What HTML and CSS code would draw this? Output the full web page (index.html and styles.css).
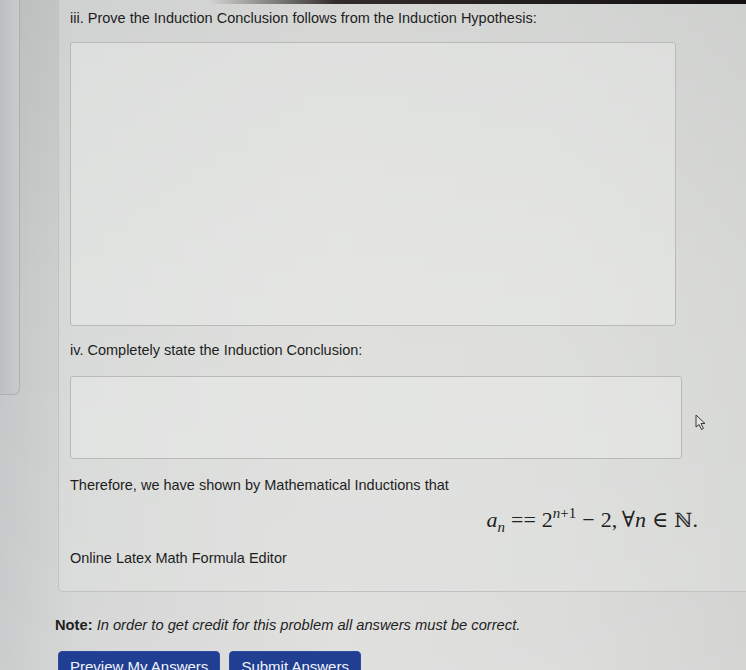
FILE: index.html
```html
<!DOCTYPE html>
<html>
<head>
<meta charset="utf-8">
<link rel="stylesheet" href="styles.css">
</head>
<body>
<div class="bezel"></div>
<div class="page">
  <div class="sidebar"></div>
  <div class="main">
    <div class="well">
      <p class="label">iii. Prove the Induction Conclusion follows from the Induction Hypothesis:</p>
      <div class="box box-large"></div>
      <p class="label label-iv">iv. Completely state the Induction Conclusion:</p>
      <div class="box box-small"></div>
      <p class="label label-therefore">Therefore, we have shown by Mathematical Inductions that</p>
      <div class="formula"><span class="math"><i>a</i><sub><i>n</i></sub><span class="op">==</span>2<sup><i>n</i>+1</sup><span class="op">−</span>2,&thinsp;∀<i>n</i><span class="op">∈</span><span class="bb">ℕ</span>.</span></div>
      <p class="label label-editor">Online Latex Math Formula Editor</p>
    </div>
    <p class="note"><b>Note:</b> <i>In order to get credit for this problem all answers must be correct.</i></p>
    <div class="buttons">
      <button class="btn">Preview My Answers</button>
      <button class="btn">Submit Answers</button>
    </div>
  </div>
</div>
<svg class="pointer" width="12" height="17" viewBox="0 0 12 17"><path d="M1 1 L1 13 L4 10.5 L6.5 15.5 L8.5 14.5 L6 9.5 L10 9.5 Z" fill="#e4e4e2" stroke="#3a3a3a" stroke-width="1" stroke-linejoin="round"/></svg>
</body>
</html>
```
FILE: styles.css
```css
html, body {
  margin: 0;
  padding: 0;
}
body {
  width: 746px;
  height: 670px;
  overflow: hidden;
  position: relative;
  font-family: "Liberation Sans", Arial, sans-serif;
  color: #1e1e1e;
  background:
    linear-gradient(180deg, rgba(160,162,162,0.25) 0%, rgba(255,255,255,0) 45%, rgba(255,255,255,0.12) 100%),
    linear-gradient(90deg, #c3c5c6 0%, #d1d3d2 10%, #dcdcda 45%, #d8d9d7 75%, #cfd0ce 100%);
}
.bezel {
  position: absolute;
  top: 0;
  left: 0;
  width: 746px;
  height: 4px;
  background: linear-gradient(90deg, rgba(20,15,15,0) 28%, rgba(20,15,15,0.85) 45%, #140f10 100%);
}
.page {
  display: flex;
  align-items: flex-start;
}
.sidebar {
  width: 19px;
  height: 394px;
  flex: none;
  background: linear-gradient(90deg, #bcc0c1, #c8cbcb);
  border-right: 1px solid #aeb1b1;
  border-bottom: 1px solid #aeb1b1;
  border-radius: 0 0 7px 0;
}
.main {
  flex: 1;
  padding-left: 35px;
}
.well {
  height: 592px;
  box-sizing: border-box;
  margin-left: 3px;
  padding: 8px 0 0 11px;
  border-left: 1px solid #c2c3c1;
  border-bottom: 1px solid #c2c3c1;
  border-radius: 0 0 0 5px;
  background: rgba(230,231,229,0.35);
}
.label {
  margin: 0;
  font-size: 14.5px;
  line-height: 20px;
}
.box {
  box-sizing: border-box;
  border: 1px solid #b9bab8;
  border-radius: 3px;
  background: rgba(236,237,235,0.45);
}
.box-large {
  margin-top: 14px;
  width: 606px;
  height: 284px;
}
.label-iv {
  margin-top: 14px;
}
.box-small {
  margin-top: 16px;
  width: 612px;
  height: 83px;
}
.label-therefore {
  margin-top: 16px;
}
.formula {
  height: 32px;
  margin-top: 10px;
  padding-right: 48px;
  text-align: right;
  font-family: "Liberation Serif", "DejaVu Serif", serif;
  font-size: 22px;
  line-height: 30px;
  color: #222;
}
.math i {
  font-style: italic;
}
.math sub {
  font-size: 15px;
  vertical-align: -5px;
  line-height: 0;
}
.math sup {
  font-size: 15px;
  vertical-align: 9px;
  line-height: 0;
}
.op {
  padding: 0 6px;
}
.bb {
  font-family: "DejaVu Serif", serif;
  font-size: 20px;
}
.label-editor {
  margin-top: 11px;
}
.note {
  margin: 23px 0 0 0;
  font-size: 14.7px;
  line-height: 20px;
}
.buttons {
  display: flex;
  gap: 9px;
  margin-top: 16px;
  padding-left: 3px;
}
.btn {
  font-family: "Liberation Sans", Arial, sans-serif;
  font-size: 15px;
  color: #f2f4fa;
  background: #213f92;
  border: 1px solid #2b4aa0;
  border-radius: 4px;
  height: 36px;
  padding: 6px 11px 0 11px;
  display: flex;
  align-items: flex-start;
}
.pointer {
  position: absolute;
  left: 695px;
  top: 414px;
}
```
